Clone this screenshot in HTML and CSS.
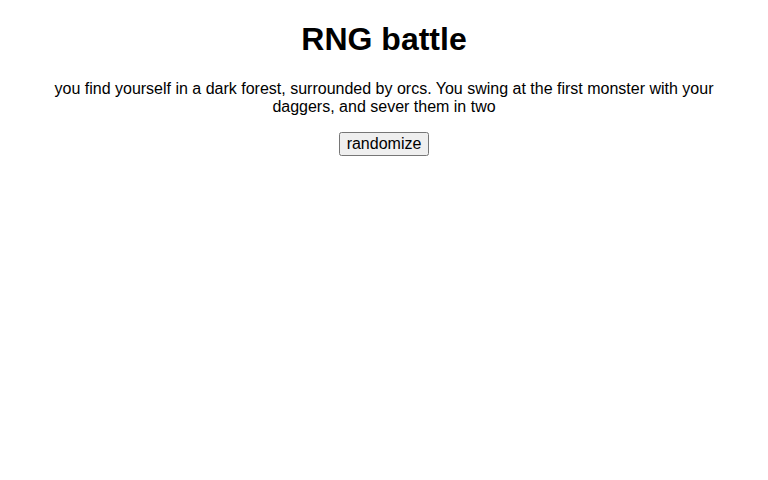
FILE: index.html
```html
<!DOCTYPE html>
<html>
<head>
<meta charset="utf-8">
<title>RNG battle</title>
<link rel="stylesheet" href="styles.css">
</head>
<body>
<main class="game">
  <h1 class="game-title">RNG battle</h1>
  <p class="story">you find yourself in a dark forest, surrounded by orcs. You swing at the first monster with your daggers, and sever them in two</p>
  <button class="roll-btn" type="button">randomize</button>
</main>
</body>
</html>
```
FILE: styles.css
```css
body {
  margin: 0 8px;
  font-family: "Liberation Sans", Arial, sans-serif;
  text-align: center;
}

.game-title {
  font-size: 2em;
  margin: 0.67em 0;
}

.story {
  max-width: 680px;
  margin: 1em auto;
}

.roll-btn {
  font-family: "Liberation Sans", Arial, sans-serif;
  font-size: 16px;
}
```
